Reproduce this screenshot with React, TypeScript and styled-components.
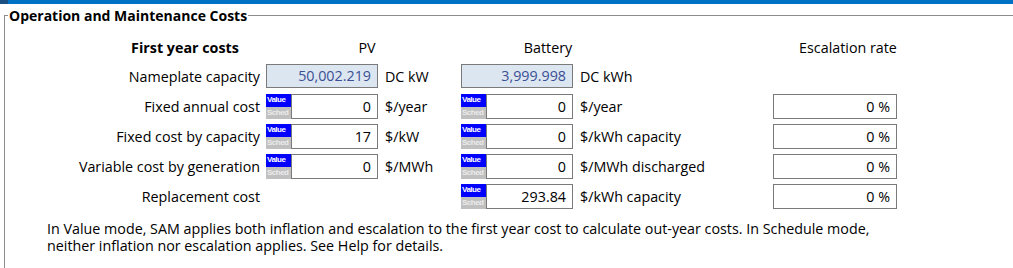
import styled, { createGlobalStyle } from 'styled-components';

const GlobalStyle = createGlobalStyle`
	html, body {
		margin: 0;
		padding: 0;
		background: #ffffff;
		overflow: hidden;
	}
	body {
		font-family: 'Open Sans', 'Noto Sans', sans-serif;
		font-size: 14.3px;
		color: #000000;
	}
`;

type Cell = { kind: 'value' | 'fixed' | 'none'; value?: string; unit?: string };

type Row = { label: string; pv: Cell; battery: Cell; escalation?: string };

const rows: Row[] = [
	{
		label: 'Nameplate capacity',
		pv: { kind: 'fixed', value: '50,002.219', unit: 'DC kW' },
		battery: { kind: 'fixed', value: '3,999.998', unit: 'DC kWh' },
	},
	{
		label: 'Fixed annual cost',
		pv: { kind: 'value', value: '0', unit: '$/year' },
		battery: { kind: 'value', value: '0', unit: '$/year' },
		escalation: '0 %',
	},
	{
		label: 'Fixed cost by capacity',
		pv: { kind: 'value', value: '17', unit: '$/kW' },
		battery: { kind: 'value', value: '0', unit: '$/kWh capacity' },
		escalation: '0 %',
	},
	{
		label: 'Variable cost by generation',
		pv: { kind: 'value', value: '0', unit: '$/MWh' },
		battery: { kind: 'value', value: '0', unit: '$/MWh discharged' },
		escalation: '0 %',
	},
	{
		label: 'Replacement cost',
		pv: { kind: 'none' },
		battery: { kind: 'value', value: '293.84', unit: '$/kWh capacity' },
		escalation: '0 %',
	},
];

const App = () => {
	return (
		<>
			<GlobalStyle />
			<TopBar />
			<Group>
				<Legend>Operation and Maintenance Costs</Legend>
				<CostGrid>
					{/* header offsets: how far each title sits off its column centre */}
					<HeaderCell $bold $col="1" $offset={58}>
						First year costs
					</HeaderCell>
					<HeaderCell $col="2 / span 2" $offset={7}>
						PV
					</HeaderCell>
					<HeaderCell $col="4 / span 2" $offset={-138}>
						Battery
					</HeaderCell>
					<HeaderCell $col="6" $offset={26}>
						Escalation rate
					</HeaderCell>

					{rows.map((row, i) => (
						<CostRow key={i} row={row} />
					))}
				</CostGrid>
				<Note>
					In Value mode, SAM applies both inflation and escalation to the first year cost to calculate
					out-year costs. In Schedule mode,
					<br />
					neither inflation nor escalation applies. See Help for details.
				</Note>
			</Group>
		</>
	);
};

const CostRow = ({ row }: { row: Row }) => {
	return (
		<>
			<Label>{row.label}</Label>
			<Widget cell={row.pv} />
			<Unit>{row.pv.unit}</Unit>
			<Widget cell={row.battery} />
			<Unit>{row.battery.unit}</Unit>
			{row.escalation ? <NumBox>{row.escalation}</NumBox> : <span />}
		</>
	);
};

const Widget = ({ cell }: { cell: Cell }) => {
	if (cell.kind === 'none') return <span />;
	if (cell.kind === 'fixed') return <FixedBox>{cell.value}</FixedBox>;
	return (
		<ValueField>
			<Toggle>
				<ToggleHalf $active>Value</ToggleHalf>
				<ToggleHalf>Sched</ToggleHalf>
			</Toggle>
			<NumBox>{cell.value}</NumBox>
		</ValueField>
	);
};

const TopBar = styled.div`
	height: 4px;
	background: #0072c6;
	border-left: 8px solid #1c4f82;
`;

const Group = styled.fieldset`
	margin: 2px 0 0 4px;
	padding: 0 0 40px 0;
	width: 1040px;
	border: 1px solid #8c8c8c;
	box-sizing: border-box;
	min-height: 300px;
`;

const Legend = styled.legend`
	padding: 0 1px;
	margin-left: 3px;
	font-weight: bold;
	font-size: 14px;
	line-height: 19px;
`;

const CostGrid = styled.div`
	display: grid;
	grid-template-columns: 220px 112px 83px 112px 200px 124px;
	grid-template-rows: 21px 26px;
	grid-auto-rows: 25px;
	row-gap: 5px;
	margin: 12px 0 0 41px;
	align-items: center;
`;

const HeaderCell = styled.div<{ $bold?: boolean; $col: string; $offset: number }>`
	grid-column: ${(p) => p.$col};
	grid-row: 1;
	text-align: center;
	font-weight: ${(p) => (p.$bold ? 'bold' : 'normal')};
	margin-left: ${(p) => (p.$offset > 0 ? p.$offset : 0)}px;
	margin-right: ${(p) => (p.$offset < 0 ? -p.$offset : 0)}px;
	white-space: nowrap;
`;

const Label = styled.div`
	text-align: right;
	padding-right: 6px;
	white-space: nowrap;
`;

const Unit = styled.div`
	padding-left: 7px;
	white-space: nowrap;
`;

const boxBase = `
	box-sizing: border-box;
	border: 1px solid #7a7a7a;
	text-align: right;
	padding: 0 6px 0 4px;
	white-space: nowrap;
`;

const FixedBox = styled.div`
	${boxBase}
	height: 24px;
	line-height: 22px;
	background: #dce6f1;
	color: #3a4f94;
`;

const NumBox = styled.div`
	${boxBase}
	flex: 1;
	height: 25px;
	line-height: 23px;
	background: #ffffff;
`;

const ValueField = styled.div`
	display: flex;
	height: 25px;
`;

const Toggle = styled.div`
	display: flex;
	flex-direction: column;
	width: 25px;
	flex-shrink: 0;
`;

const ToggleHalf = styled.div<{ $active?: boolean }>`
	flex: 1;
	background: ${(p) => (p.$active ? '#0000ff' : '#c0c0c0')};
	color: ${(p) => (p.$active ? '#ffffff' : '#ececec')};
	font-family: 'Liberation Sans', Arial, sans-serif;
	font-size: 8px;
	font-weight: bold;
	line-height: 12px;
	padding-left: 1px;
	letter-spacing: -0.5px;
	white-space: nowrap;
`;

const Note = styled.p`
	margin: 11px 0 0 42px;
	line-height: 17px;
	white-space: nowrap;
`;

export default App;
